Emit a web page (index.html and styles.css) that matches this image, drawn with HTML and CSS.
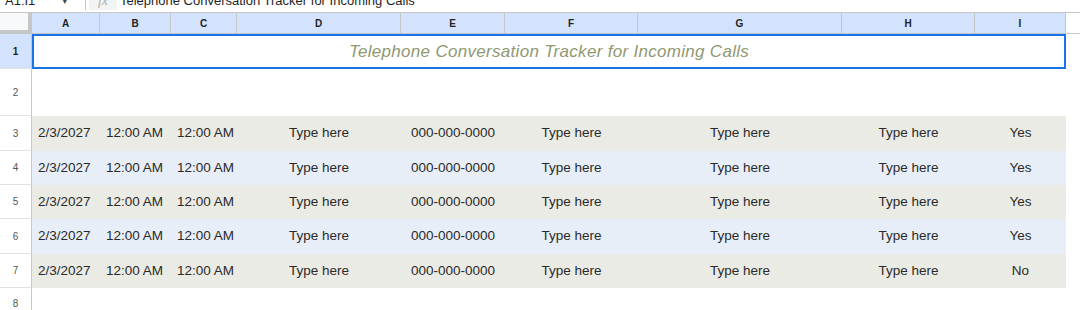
FILE: index.html
```html
<!DOCTYPE html>
<html>
<head>
<meta charset="utf-8">
<link rel="stylesheet" href="styles.css">
</head>
<body>
<div class="fbar">
  <div class="fbar-inner">
    <span class="namebox">A1:I1</span>
    <span class="caret">▾</span>
    <span class="sep"></span>
    <span class="fx">fx</span>
    <span class="ftext">Telephone Conversation Tracker for Incoming Calls</span>
  </div>
</div>
<div class="sheet">
  <div class="corner"></div>
  <div class="colh">A</div><div class="colh">B</div><div class="colh">C</div><div class="colh">D</div><div class="colh">E</div><div class="colh">F</div><div class="colh">G</div><div class="colh">H</div><div class="colh">I</div><div class="colh rest"></div>

  <div class="rowh sel">1</div>
  <div class="title">Telephone Conversation Tracker for Incoming Calls</div>
  <div class="fill"></div>

  <div class="rowh">2</div>
  <div class="blank"></div>

  <div class="rowh">3</div>
  <div class="cell l a">2/3/2027</div><div class="cell l a">12:00 AM</div><div class="cell l a">12:00 AM</div><div class="cell c a">Type here</div><div class="cell c a">000-000-0000</div><div class="cell c a">Type here</div><div class="cell c a">Type here</div><div class="cell c a">Type here</div><div class="cell c a">Yes</div><div class="fill"></div>

  <div class="rowh">4</div>
  <div class="cell l b">2/3/2027</div><div class="cell l b">12:00 AM</div><div class="cell l b">12:00 AM</div><div class="cell c b">Type here</div><div class="cell c b">000-000-0000</div><div class="cell c b">Type here</div><div class="cell c b">Type here</div><div class="cell c b">Type here</div><div class="cell c b">Yes</div><div class="fill"></div>

  <div class="rowh">5</div>
  <div class="cell l a">2/3/2027</div><div class="cell l a">12:00 AM</div><div class="cell l a">12:00 AM</div><div class="cell c a">Type here</div><div class="cell c a">000-000-0000</div><div class="cell c a">Type here</div><div class="cell c a">Type here</div><div class="cell c a">Type here</div><div class="cell c a">Yes</div><div class="fill"></div>

  <div class="rowh">6</div>
  <div class="cell l b">2/3/2027</div><div class="cell l b">12:00 AM</div><div class="cell l b">12:00 AM</div><div class="cell c b">Type here</div><div class="cell c b">000-000-0000</div><div class="cell c b">Type here</div><div class="cell c b">Type here</div><div class="cell c b">Type here</div><div class="cell c b">Yes</div><div class="fill"></div>

  <div class="rowh">7</div>
  <div class="cell l a">2/3/2027</div><div class="cell l a">12:00 AM</div><div class="cell l a">12:00 AM</div><div class="cell c a">Type here</div><div class="cell c a">000-000-0000</div><div class="cell c a">Type here</div><div class="cell c a">Type here</div><div class="cell c a">Type here</div><div class="cell c a">No</div><div class="fill"></div>

  <div class="rowh">8</div>
  <div class="blank"></div>
</div>
</body>
</html>
```

FILE: styles.css
```css
* { box-sizing: border-box; }
html, body { margin: 0; padding: 0; background: #fff; overflow: hidden; }
body { width: 1080px; height: 310px; font-family: "Liberation Sans", Arial, sans-serif; color: #222; }

.fbar { height: 13px; overflow: hidden; border-bottom: 1px solid #c7c7c7; }
.fbar-inner { display: flex; align-items: center; height: 20px; margin-top: -10px; font-size: 13px; color: #1f1f1f; }
.namebox { width: 62px; padding-left: 5px; }
.caret { width: 18px; font-size: 11px; color: #444; }
.sep { width: 1px; height: 20px; background: #c7c7c7; margin-left: 5px; }
.fx { width: 28px; height: 20px; background: #f1f3f4; color: #b0b0b0; font-style: italic; font-family: "Liberation Serif", serif; font-size: 14px; text-align: center; line-height: 22px; margin-left: 3px; }
.ftext { padding-left: 3px; }

.sheet {
  display: grid;
  grid-template-columns: 32px 68px 71px 66px 164px 104px 133px 204px 133px 91px 1fr;
  grid-template-rows: 21px 35px 47px 35px 34px 34px 35px 34px 32px;
}
.corner { background: #f8f9fa; border-right: 4px solid #c4c7c5; border-bottom: 4px solid #c4c7c5; }
.colh {
  background: #d3e3fd; border-right: 1px solid #c4c7c5; border-bottom: 1px solid #c4c7c5;
  display: flex; align-items: center; justify-content: center;
  font-size: 10px; font-weight: bold; color: #1f1f1f;
}
.colh.rest { background: #fff; border-right: none; }
.rowh {
  border-right: 1px solid #c4c7c5; border-bottom: 1px solid #e1e1e1;
  display: flex; align-items: center; justify-content: center;
  font-size: 10px; color: #555;
}
.rowh.sel { background: #d3e3fd; font-weight: bold; color: #1f1f1f; }
.title {
  grid-column: 2 / 11;
  border: 2px solid #1a73e8;
  display: flex; align-items: center; justify-content: center;
  font-style: italic; font-size: 17px; color: #8f9870;
  letter-spacing: 0.3px;
}
.blank { grid-column: 2 / 12; }
.fill { background: #fff; }
.cell { display: flex; align-items: center; font-size: 13.5px; color: #2a2a2a; white-space: nowrap; padding-bottom: 2px; }
.cell.l { padding-left: 6px; }
.cell.c { justify-content: center; }
.a { background: #ebebe5; }
.b { background: #e8eef7; }
```
